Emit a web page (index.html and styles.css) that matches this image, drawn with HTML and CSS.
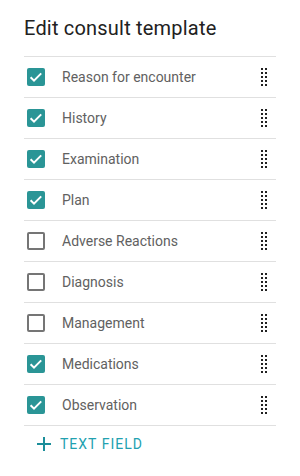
FILE: index.html
```html
<!DOCTYPE html>
<html lang="en">
<head>
    <meta charset="UTF-8">
    <meta name="viewport" content="width=device-width, initial-scale=1.0">
    <title>Edit consult template</title>
    <link rel="stylesheet" href="styles.css">
</head>
<body>
    <div class="panel">
        <h2 class="title">Edit consult template</h2>
        <ul class="field-list">
            <li class="field-row"><span class="check checked"></span><span class="label">Reason for encounter</span><span class="handle"></span></li>
            <li class="field-row"><span class="check checked"></span><span class="label">History</span><span class="handle"></span></li>
            <li class="field-row"><span class="check checked"></span><span class="label">Examination</span><span class="handle"></span></li>
            <li class="field-row"><span class="check checked"></span><span class="label">Plan</span><span class="handle"></span></li>
            <li class="field-row"><span class="check"></span><span class="label">Adverse Reactions</span><span class="handle"></span></li>
            <li class="field-row"><span class="check"></span><span class="label">Diagnosis</span><span class="handle"></span></li>
            <li class="field-row"><span class="check"></span><span class="label">Management</span><span class="handle"></span></li>
            <li class="field-row"><span class="check checked"></span><span class="label">Medications</span><span class="handle"></span></li>
            <li class="field-row"><span class="check checked"></span><span class="label">Observation</span><span class="handle"></span></li>
        </ul>
        <button class="add-btn">
            <svg width="14" height="14" viewBox="0 0 14 14"><path d="M7 0v14M0 7h14" stroke="#1b8e9a" stroke-width="2"/></svg>
            TEXT FIELD
        </button>
    </div>
</body>
</html>
```

FILE: styles.css
```css
body {
    margin: 0;
    font-family: Roboto, "Liberation Sans", sans-serif;
    background: #fff;
}

.panel {
    padding: 16px 24px 0;
}

.title {
    margin: 0;
    font-size: 20px;
    font-weight: 400;
    letter-spacing: 0.2px;
    line-height: 24px;
    color: #212121;
    padding-bottom: 16px;
}

.field-list {
    list-style: none;
    margin: 0;
    padding: 0;
    border-bottom: 1px solid #e0e0e0;
}

.field-row {
    display: flex;
    align-items: center;
    height: 40px;
    border-top: 1px solid #e0e0e0;
}

.check {
    width: 18px;
    height: 18px;
    margin-left: 3px;
    box-sizing: border-box;
    border: 2px solid #757575;
    border-radius: 2px;
    flex-shrink: 0;
}

.check.checked {
    border: none;
    background: #2a9596 url("data:image/svg+xml;utf8,<svg xmlns='http://www.w3.org/2000/svg' viewBox='0 0 18 18'><path d='M3.6 9.2l3.4 3.4 7.2-7.2' fill='none' stroke='white' stroke-width='2'/></svg>") no-repeat center;
}

.label {
    flex: 1;
    margin-left: 17px;
    font-size: 14px;
    color: #616161;
}

.handle {
    width: 6px;
    height: 18px;
    margin-right: 9px;
    background: url("data:image/svg+xml;utf8,<svg xmlns='http://www.w3.org/2000/svg' width='6' height='18'><g fill='%23212121'><rect x='0' y='0' width='2' height='2'/><rect x='4' y='0' width='2' height='2'/><rect x='0' y='4' width='2' height='2'/><rect x='4' y='4' width='2' height='2'/><rect x='0' y='8' width='2' height='2'/><rect x='4' y='8' width='2' height='2'/><rect x='0' y='12' width='2' height='2'/><rect x='4' y='12' width='2' height='2'/><rect x='0' y='16' width='2' height='2'/><rect x='4' y='16' width='2' height='2'/></g></svg>") no-repeat;
}

.add-btn {
    display: flex;
    align-items: center;
    gap: 9px;
    margin: 0;
    padding: 10px 0 0 13px;
    border: none;
    background: none;
    font-family: inherit;
    font-size: 14px;
    font-weight: 400;
    letter-spacing: 1px;
    color: #22a1b0;
}
```
